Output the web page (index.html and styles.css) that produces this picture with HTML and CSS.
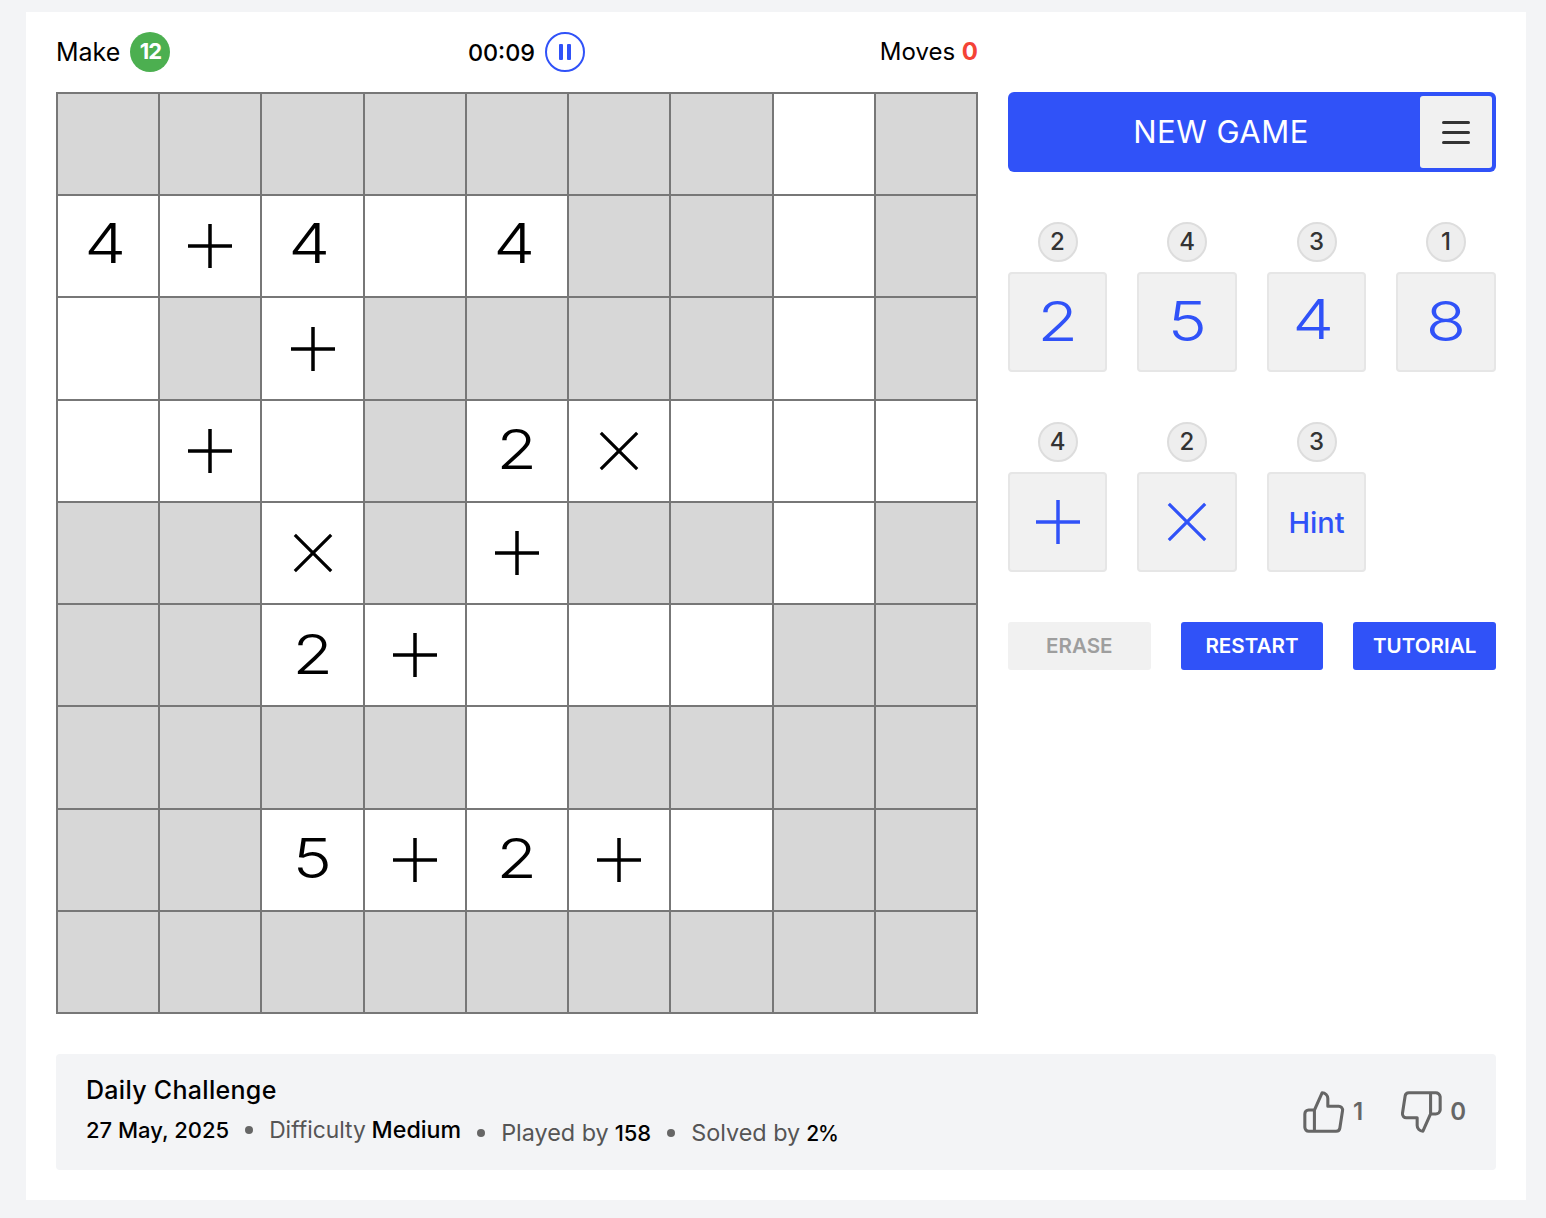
FILE: index.html
```html
<!DOCTYPE html>
<html lang="en">
<head>
<meta charset="utf-8">
<title>Daily Challenge</title>
<link rel="stylesheet" href="styles.css">
</head>
<body>
<svg class="defs" width="0" height="0" aria-hidden="true">
  <symbol id="plus" viewBox="0 0 44 44"><path d="M22 0V44M0 22H44" fill="none" stroke="currentColor" stroke-width="3.5"/></symbol>
  <symbol id="times" viewBox="0 0 44 44"><path d="M2 2L42 42M42 2L2 42" fill="none" stroke="currentColor" stroke-width="3.5"/></symbol>
</svg>
<main class="card">
  <div class="game">
    <section class="left">
      <header class="status">
        <div class="make"><span>Make</span><span class="target">12</span></div>
        <div class="timer"><span>00:09</span><span class="pause"><i></i><i></i></span></div>
        <div class="moves">Moves <b>0</b></div>
      </header>
      <div class="board">
        <div class="c g"></div><div class="c g"></div><div class="c g"></div><div class="c g"></div><div class="c g"></div><div class="c g"></div><div class="c g"></div><div class="c"></div><div class="c g"></div>
        <div class="c"><span class="d d4">4</span></div><div class="c"><svg class="op"><use href="#plus"/></svg></div><div class="c"><span class="d d4">4</span></div><div class="c"></div><div class="c"><span class="d d4">4</span></div><div class="c g"></div><div class="c g"></div><div class="c"></div><div class="c g"></div>
        <div class="c"></div><div class="c g"></div><div class="c"><svg class="op"><use href="#plus"/></svg></div><div class="c g"></div><div class="c g"></div><div class="c g"></div><div class="c g"></div><div class="c"></div><div class="c g"></div>
        <div class="c"></div><div class="c"><svg class="op"><use href="#plus"/></svg></div><div class="c"></div><div class="c g"></div><div class="c"><span class="d">2</span></div><div class="c"><svg class="op x"><use href="#times"/></svg></div><div class="c"></div><div class="c"></div><div class="c"></div>
        <div class="c g"></div><div class="c g"></div><div class="c"><svg class="op x"><use href="#times"/></svg></div><div class="c g"></div><div class="c"><svg class="op"><use href="#plus"/></svg></div><div class="c g"></div><div class="c g"></div><div class="c"></div><div class="c g"></div>
        <div class="c g"></div><div class="c g"></div><div class="c"><span class="d">2</span></div><div class="c"><svg class="op"><use href="#plus"/></svg></div><div class="c"></div><div class="c"></div><div class="c"></div><div class="c g"></div><div class="c g"></div>
        <div class="c g"></div><div class="c g"></div><div class="c g"></div><div class="c g"></div><div class="c"></div><div class="c g"></div><div class="c g"></div><div class="c g"></div><div class="c g"></div>
        <div class="c g"></div><div class="c g"></div><div class="c"><span class="d">5</span></div><div class="c"><svg class="op"><use href="#plus"/></svg></div><div class="c"><span class="d">2</span></div><div class="c"><svg class="op"><use href="#plus"/></svg></div><div class="c"></div><div class="c g"></div><div class="c g"></div>
        <div class="c g"></div><div class="c g"></div><div class="c g"></div><div class="c g"></div><div class="c g"></div><div class="c g"></div><div class="c g"></div><div class="c g"></div><div class="c g"></div>
      </div>
    </section>
    <aside class="side">
      <div class="newgame">
        <span class="ng-label">NEW GAME</span>
        <span class="menu"><i></i><i></i><i></i></span>
      </div>
      <div class="tiles">
        <div class="tile-wrap"><span class="count">2</span><div class="tile"><span class="d">2</span></div></div>
        <div class="tile-wrap"><span class="count">4</span><div class="tile"><span class="d">5</span></div></div>
        <div class="tile-wrap"><span class="count">3</span><div class="tile"><span class="d d4">4</span></div></div>
        <div class="tile-wrap"><span class="count">1</span><div class="tile"><span class="d">8</span></div></div>
        <div class="tile-wrap"><span class="count">4</span><div class="tile"><svg class="op"><use href="#plus"/></svg></div></div>
        <div class="tile-wrap"><span class="count">2</span><div class="tile"><svg class="op x"><use href="#times"/></svg></div></div>
        <div class="tile-wrap"><span class="count">3</span><div class="tile hint">Hint</div></div>
      </div>
      <div class="actions">
        <button class="btn off">ERASE</button>
        <button class="btn">RESTART</button>
        <button class="btn">TUTORIAL</button>
      </div>
    </aside>
  </div>
  <footer class="info">
    <div class="info-text">
      <h1>Daily Challenge</h1>
      <div class="meta">
        <span class="item">27 May, 2025</span>
        <span class="dot"></span>
        <span class="item"><em>Difficulty</em> <span class="wide">Medium</span></span>
        <span class="dot low"></span>
        <span class="item low"><em>Played by</em> 158</span>
        <span class="dot low"></span>
        <span class="item low"><em>Solved by</em> <span class="tight">2%</span></span>
      </div>
    </div>
    <div class="votes">
      <span class="vote">
        <svg class="thumb" viewBox="0 0 24 24"><path d="M14 9V5a3 3 0 0 0-3-3l-4 9v11h11.28a2 2 0 0 0 2-1.7l1.38-9a2 2 0 0 0-2-2.3zM7 22H4a2 2 0 0 1-2-2v-7a2 2 0 0 1 2-2h3"/></svg>
        <span class="num">1</span>
      </span>
      <span class="vote">
        <svg class="thumb" viewBox="0 0 24 24"><path d="M10 15v4a3 3 0 0 0 3 3l4-9V2H5.72a2 2 0 0 0-2 1.7l-1.38 9a2 2 0 0 0 2 2.3zm7-13h2.67A2.31 2.31 0 0 1 22 4v7a2.31 2.31 0 0 1-2.33 2H17"/></svg>
        <span class="num">0</span>
      </span>
    </div>
  </footer>
</main>
</body>
</html>
```
FILE: styles.css
```css
* { box-sizing: border-box; }
html, body { margin: 0; padding: 0; }
body {
  background: #f3f4f6;
  font-family: Inter, "Noto Sans", sans-serif;
  color: #000;
  padding: 12px 20px 18px 26px;
}
.defs { position: absolute; }
.card {
  width: 1500px;
  height: 1188px;
  background: #fff;
  padding: 20px 30px 30px;
  display: flex;
  flex-direction: column;
  justify-content: space-between;
}
.game { display: flex; gap: 30px; }
.left { width: 922px; flex: none; }
.status {
  height: 40px;
  margin-bottom: 20px;
  display: grid;
  grid-template-columns: 1fr 1fr 1fr;
  align-items: center;
  font-size: 24px;
}
.make { display: flex; align-items: center; gap: 10px; font-size: 25px; }
.target {
  width: 40px; height: 40px;
  border-radius: 50%;
  background: #4caf50;
  color: #fff;
  font-size: 22px;
  font-weight: 700;
  letter-spacing: -1px;
  padding-bottom: 2px;
  display: flex; align-items: center; justify-content: center;
}
.timer {
  display: flex; align-items: center; justify-content: center; gap: 10px;
  padding-left: 19px;
  font-size: 23.4px;
  font-weight: 500;
}
.pause {
  width: 40px; height: 40px;
  border-radius: 50%;
  border: 2px solid #3052f8;
  display: flex; align-items: center; justify-content: center; gap: 4px;
}
.pause i { width: 4px; height: 16px; border-radius: 1px; background: #3052f8; }
.moves { text-align: right; padding-bottom: 2px; }
.moves b { color: #f44336; font-weight: 700; }
.board {
  width: 922px; height: 922px;
  background: #777;
  padding: 2px;
  display: grid;
  grid-template-columns: repeat(9, 1fr);
  grid-template-rows: repeat(9, 1fr);
  gap: 2px;
}
.c {
  background: #fff;
  display: flex; align-items: center; justify-content: center;
}
.c.g { background: #d7d7d7; }
.d {
  display: inline-block;
  font-size: 55px;
  font-weight: 300;
  line-height: 1;
  margin-top: -2px;
  transform: scaleX(1.2);
}
.d4 { margin: -5px 6px 0 0; }
.op { width: 44px; height: 44px; }
.op.x { width: 40px; height: 40px; }
.side { width: 488px; flex: none; margin-top: 60px; }
.newgame {
  height: 80px;
  background: #3052f8;
  border-radius: 6px;
  padding: 4px;
  display: flex; align-items: center;
}
.ng-label {
  flex: 1;
  padding: 0 0 2px 10px;
  text-align: center;
  color: #fff;
  font-size: 31px;
  font-weight: 400;
  letter-spacing: .5px;
}
.menu {
  width: 72px; height: 72px;
  background: #f1f1f1;
  border-radius: 3px;
  display: flex; flex-direction: column; align-items: center; justify-content: center; gap: 7px;
}
.menu i { width: 28px; height: 3px; border-radius: 2px; background: #333; }
.tiles {
  margin-top: 50px;
  display: grid;
  grid-template-columns: 99px 100px 99px 100px;
  column-gap: 30px;
  row-gap: 50px;
}
.tile-wrap { display: flex; flex-direction: column; align-items: center; gap: 10px; }
.count {
  width: 40px; height: 40px;
  border-radius: 50%;
  background: #eee;
  border: 2px solid #ddd;
  color: #333;
  font-size: 24px;
  font-weight: 500;
  padding-bottom: 2px;
  display: flex; align-items: center; justify-content: center;
}
.tile {
  width: 100%; height: 100px;
  background: #f1f1f1;
  border: 2px solid #e6e6e6;
  border-radius: 4px;
  color: #3052f8;
  display: flex; align-items: center; justify-content: center;
}
.hint { font-size: 29px; font-weight: 500; }
.actions {
  margin-top: 50px;
  display: grid;
  grid-template-columns: repeat(3, 1fr);
  gap: 30px;
}
.btn {
  height: 48px;
  border: 0;
  border-radius: 3px;
  background: #3052f8;
  color: #fff;
  font: 600 20.6px Inter, "Noto Sans", sans-serif;
  padding: 0 0 2px;
}
.btn.off { background: #f1f1f1; color: #9e9e9e; }
.info {
  height: 116px;
  background: #f3f4f6;
  border-radius: 4px;
  padding: 20px 30px;
  display: flex;
  align-items: center;
  justify-content: space-between;
}
.info-text { display: flex; flex-direction: column; gap: 9px; margin-top: -2px; }
h1 { margin: 0; font-size: 25px; font-weight: 500; line-height: 32px; letter-spacing: .3px; }
.meta { display: flex; align-items: flex-start; font-size: 22px; line-height: 30px; }
.item { font-weight: 500; }
.item em { font-style: normal; font-size: 22.8px; font-weight: 400; color: #555; }
.item.low em { font-size: 23.4px; }
.wide { font-size: 23.2px; }
.tight { font-size: 21px; letter-spacing: -1px; }
.low { margin-top: 3px; }
.dot { width: 8px; height: 8px; border-radius: 50%; background: #666; margin: 11px 16px 0; }
.dot.low { margin-top: 14px; }
.votes { display: flex; align-items: center; gap: 35px; color: #666; font-size: 24px; font-weight: 600; }
.vote { display: flex; align-items: center; gap: 6px; }
.num { padding-bottom: 2px; }
.thumb { width: 46px; height: 46px; margin-bottom: 1px; fill: none; stroke: #666; stroke-width: 1.6; stroke-linejoin: round; stroke-linecap: round; }
```
